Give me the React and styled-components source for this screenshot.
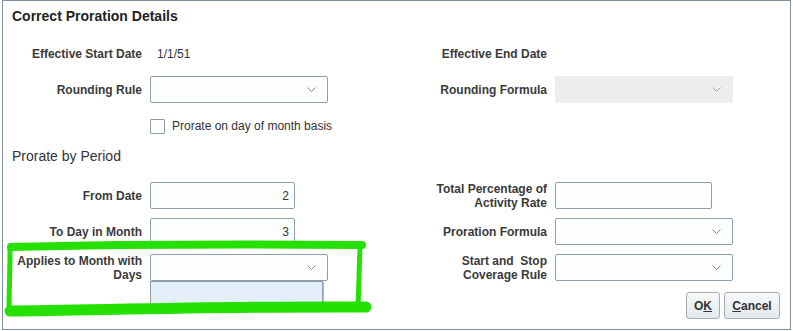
import React from 'react';
import styled, { createGlobalStyle } from 'styled-components';

const GlobalStyle = createGlobalStyle`
  body {
    margin: 0;
    background: #ffffff;
    font-family: "Liberation Sans", Arial, sans-serif;
  }
`;

const Dialog = styled.div`
  position: relative;
  box-sizing: border-box;
  margin-left: 2px;
  width: 789px;
  height: 330px;
  border: 1px solid #7f90a2;
  background: #ffffff;
`;

const Title = styled.h1`
  margin: 0;
  padding: 7px 0 0 9px;
  font-size: 14px;
  line-height: 17px;
  font-weight: bold;
  color: #1f1f1f;
`;

const SectionTitle = styled.h2`
  margin: 9px 0 0;
  padding-left: 9px;
  font-size: 14px;
  line-height: 17px;
  font-weight: normal;
  color: #333333;
`;

const FormGrid = styled.div`
  display: grid;
  grid-template-columns: 139px 244px 145px 1fr;
  grid-auto-rows: 27px;
  column-gap: 8px;
  row-gap: 9px;
  align-items: center;
  margin-top: ${p => p.$top}px;
`;

const Label = styled.div`
  font-size: 12px;
  line-height: 14px;
  font-weight: bold;
  color: #3a3a3a;
  text-align: right;
`;

const Value = styled.div`
  padding-left: 7px;
  font-size: 12px;
  color: #333333;
`;

const Cell = styled.div`
  position: relative;
  display: flex;
  align-items: center;
  height: 27px;
`;

const TextInput = styled.input`
  box-sizing: border-box;
  width: ${p => p.$width}px;
  height: 27px;
  padding: 0 5px;
  border: 1px solid #8e9fb0;
  border-radius: 2px;
  background: #fcfdfe;
  font-family: inherit;
  font-size: 12px;
  color: #333333;
  text-align: right;
  outline: none;
`;

const SelectBox = styled.div`
  box-sizing: border-box;
  display: flex;
  align-items: center;
  justify-content: flex-end;
  width: 178px;
  height: 27px;
  padding-right: 11px;
  border: 1px solid ${p => (p.$disabled ? '#ededef' : '#8e9fb0')};
  border-radius: 2px;
  background: ${p => (p.$disabled ? '#ededef' : '#fcfdfe')};
`;

const Popup = styled.div`
  position: absolute;
  top: 27px;
  left: 0;
  box-sizing: border-box;
  width: 173px;
  height: 29px;
  border: 1px solid #8e9fb0;
  background: #e4effb;
  box-shadow: 1px 1px 1px rgba(0, 0, 0, 0.25);
`;

const CheckRow = styled.label`
  display: flex;
  align-items: center;
  gap: 7px;
  font-size: 12px;
  color: #333333;
`;

const CheckBox = styled.span`
  box-sizing: border-box;
  width: 15px;
  height: 15px;
  margin-top: 1px;
  border: 1px solid #8b9cac;
  border-radius: 1px;
  background: #ffffff;
`;

const Footer = styled.div`
  display: flex;
  justify-content: flex-end;
  gap: 4px;
  margin-top: 11px;
  padding-right: 10px;
`;

const Button = styled.button`
  box-sizing: border-box;
  height: 27px;
  width: ${p => p.$width}px;
  padding: 0;
  border: 1px solid #a2acb6;
  border-radius: 3px;
  background: linear-gradient(#f7f8fa, #e4e9ee);
  font-family: inherit;
  font-size: 12px;
  font-weight: bold;
  color: #333333;
`;

const Highlight = styled.svg`
  position: absolute;
  left: -3px;
  top: -1px;
  width: 793px;
  height: 331px;
  pointer-events: none;
`;

const Chevron = ({ disabled }) => (
  <svg width="9" height="5" viewBox="0 0 9 5">
    <path
      d="M0.5 0.5 L4.5 4.5 L8.5 0.5"
      fill="none"
      stroke={disabled ? '#a6a6a6' : '#8a8a8a'}
      strokeWidth="1"
    />
  </svg>
);

const Select = ({ disabled, children }) => (
  <Cell>
    <SelectBox $disabled={disabled}>
      <Chevron disabled={disabled} />
    </SelectBox>
    {children}
  </Cell>
);

const App = () => (
  <>
    <GlobalStyle />
    <Dialog>
      <Title>Correct Proration Details</Title>

      <FormGrid $top={15}>
        <Label>Effective Start Date</Label>
        <Value>1/1/51</Value>
        <Label>Effective End Date</Label>
        <div />

        <Label>Rounding Rule</Label>
        <Select />
        <Label>Rounding Formula</Label>
        <Select disabled />

        <div />
        <CheckRow>
          <CheckBox />
          Prorate on day of month basis
        </CheckRow>
      </FormGrid>

      <SectionTitle>Prorate by Period</SectionTitle>

      <FormGrid $top={17}>
        <Label>From Date</Label>
        <Cell>
          <TextInput $width={145} value="2" readOnly />
        </Cell>
        <Label>
          Total Percentage of
          <br />
          Activity Rate
        </Label>
        <Cell>
          <TextInput $width={157} value="" readOnly />
        </Cell>

        <Label>To Day in Month</Label>
        <Cell>
          <TextInput $width={145} value="3" readOnly />
        </Cell>
        <Label>Proration Formula</Label>
        <Select />

        <Label>
          Applies to Month with
          <br />
          Days
        </Label>
        <Select>
          <Popup />
        </Select>
        <Label>
          Start and&nbsp; Stop
          <br />
          Coverage Rule
        </Label>
        <Select />
      </FormGrid>

      <Footer>
        <Button $width={34}>
          O<u>K</u>
        </Button>
        <Button $width={56}>
          <u>C</u>ancel
        </Button>
      </Footer>

      <Highlight viewBox="0 0 793 331">
        <g fill="none" stroke="#25e000" strokeLinecap="round" strokeLinejoin="round">
          <path d="M11 247 C 90 245, 220 244, 362 245" strokeWidth="8" />
          <path d="M360 247 C 359 270, 359 290, 358 304" strokeWidth="5" />
          <path d="M10 248 C 10 270, 9 295, 9 311" strokeWidth="5" />
          <path d="M10 311 C 100 310, 250 306, 366 307" strokeWidth="11" />
        </g>
      </Highlight>
    </Dialog>
  </>
);

export default App;
